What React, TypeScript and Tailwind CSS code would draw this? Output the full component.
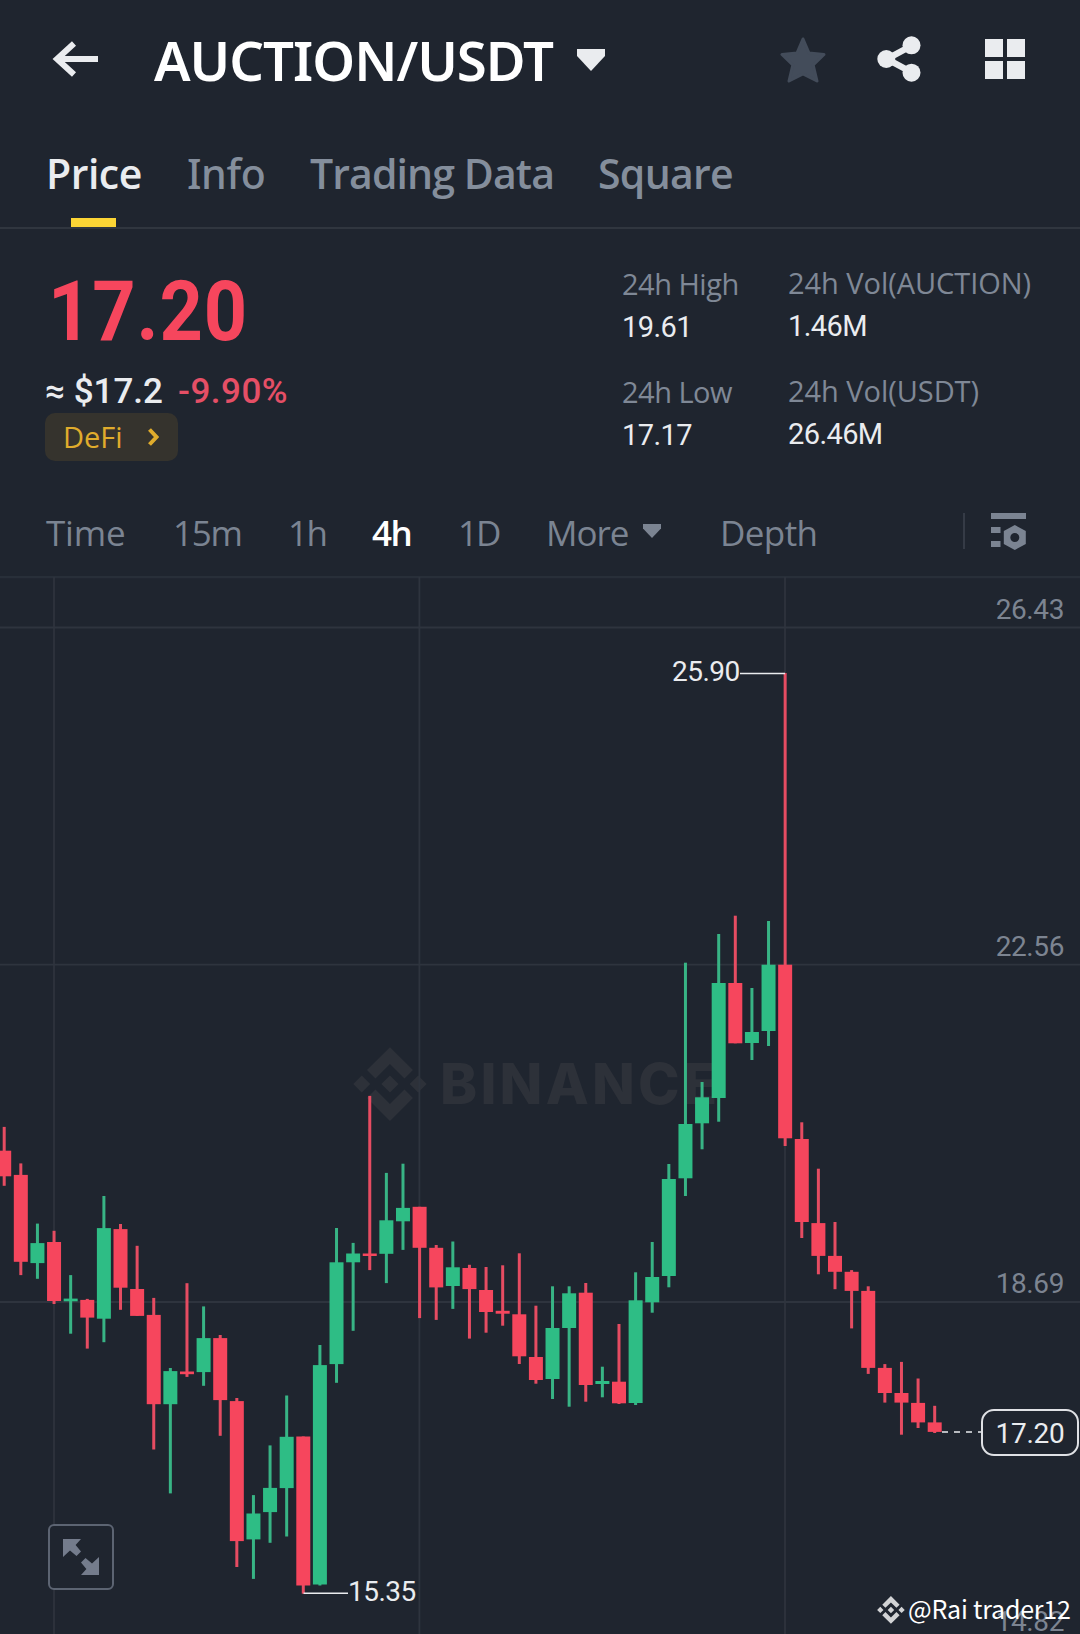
const UP = "#2ebd85";
const DOWN = "#f6465d";

// [direction, high, body top, body bottom, low] in chart pixels, one entry per 4h candle
type Candle = ["u" | "d", number, number, number, number];

const candles: Candle[] = [
  ["d", 1126.9, 1150.7, 1176.3, 1185.8],
  ["d", 1163.4, 1174.9, 1261.8, 1275.1],
  ["u", 1223.6, 1243.1, 1263.1, 1278.8],
  ["d", 1230.8, 1242, 1301, 1304],
  ["u", 1275.1, 1298.6, 1301.3, 1333.7],
  ["d", 1298.9, 1299.9, 1317.6, 1348.6],
  ["u", 1196, 1228.1, 1318.7, 1342.2],
  ["d", 1224, 1229.1, 1287.7, 1309.8],
  ["d", 1245.8, 1289, 1315.9, 1315.9],
  ["d", 1297.9, 1314.9, 1404.2, 1449.5],
  ["u", 1368, 1371.1, 1404.2, 1493.4],
  ["d", 1283.2, 1371.5, 1374.2, 1376.9],
  ["u", 1306.4, 1338.1, 1372.1, 1385.8],
  ["d", 1335, 1338.1, 1400.1, 1435.8],
  ["d", 1398, 1401.1, 1541.1, 1567],
  ["u", 1495.1, 1513.5, 1539.4, 1578.9],
  ["u", 1445.4, 1487.9, 1512.1, 1542.8],
  ["u", 1395.5, 1436.8, 1488.1, 1536.5],
  ["d", 1436.5, 1436.5, 1585.5, 1593.7],
  ["u", 1345, 1365.1, 1584.5, 1585.5],
  ["u", 1228, 1262.3, 1364.1, 1382.8],
  ["u", 1242.9, 1253.5, 1262.3, 1330.8],
  ["d", 1095.9, 1253.5, 1256, 1270.1],
  ["u", 1172.9, 1220.3, 1253.8, 1283.1],
  ["u", 1163.7, 1207.9, 1221.3, 1249.9],
  ["d", 1206.8, 1206.8, 1247.8, 1318.1],
  ["d", 1245, 1247.8, 1287.4, 1319.9],
  ["u", 1241.5, 1267.3, 1286, 1308.9],
  ["d", 1264.8, 1268, 1289.1, 1338.6],
  ["d", 1267, 1290, 1312, 1332.7],
  ["d", 1265.3, 1310.8, 1313.7, 1325.7],
  ["d", 1253.3, 1314.3, 1356.3, 1364],
  ["d", 1305.7, 1357, 1380, 1383.7],
  ["u", 1286.3, 1328, 1379, 1399],
  ["u", 1286.3, 1293.3, 1328, 1406.7],
  ["d", 1283, 1292.7, 1385, 1401.7],
  ["u", 1366.7, 1381, 1384, 1397.3],
  ["d", 1324, 1381.7, 1403.3, 1404],
  ["u", 1272.3, 1300.3, 1403, 1405],
  ["u", 1242, 1277, 1302.3, 1312.7],
  ["u", 1164, 1179, 1276, 1287.3],
  ["u", 962.7, 1124, 1178.3, 1196],
  ["u", 1082, 1097.3, 1123.3, 1149.3],
  ["u", 934, 983, 1098, 1121.7],
  ["d", 915.7, 983, 1043.3, 1043.3],
  ["u", 988, 1032, 1043, 1060],
  ["u", 921, 964.7, 1031, 1046],
  ["d", 673, 964.7, 1138.3, 1146],
  ["d", 1122.3, 1139, 1222, 1238],
  ["d", 1168.7, 1223.1, 1255.9, 1274.3],
  ["d", 1222, 1255.9, 1271.8, 1289.2],
  ["d", 1270.1, 1271.8, 1290.9, 1328.4],
  ["d", 1286.3, 1290.9, 1367.9, 1373.9],
  ["d", 1364.1, 1367.9, 1393, 1402.6],
  ["d", 1361.9, 1393, 1402.6, 1434.7],
  ["d", 1378.5, 1402.9, 1422.4, 1428],
  ["d", 1405.8, 1422.4, 1431.9, 1433],
];

const priceLines = [
  { y: 627.5, label: "26.43" },
  { y: 964.7, label: "22.56" },
  { y: 1302, label: "18.69" },
  { y: 1639.2, label: "14.82" },
];

const tabs = [
  { label: "Price", cls: "w-[141px] text-[#eaecef] font-['Open_Sans'] font-semibold tracking-[-0.5px]" },
  { label: "Info", cls: "w-[123px] text-[#848e9c] font-['Noto_Sans'] font-medium tracking-[-0.4px]" },
  { label: "Trading Data", cls: "w-[288px] text-[#848e9c] font-['Open_Sans'] font-semibold tracking-[-0.9px]" },
  { label: "Square", cls: "w-[150px] text-[#848e9c] font-['Open_Sans'] font-semibold tracking-[-0.7px]" },
];

const frames = [
  { label: "Time", cls: "w-[127px] tracking-[-0.2px]" },
  { label: "15m", cls: "w-[115px] tracking-[-1.2px]" },
  { label: "1h", cls: "w-[84px] tracking-[-1.5px]" },
  { label: "4h", cls: "w-[86px] font-semibold text-white tracking-[-1.5px]" },
  { label: "1D", cls: "w-[88px] tracking-[-2px]" },
  { label: "More", cls: "w-[97px] tracking-[-1px]" },
];

const stats = [
  [
    { label: "24h High", value: "19.61" },
    { label: "24h Low", value: "17.17" },
  ],
  [
    { label: "24h Vol(AUCTION)", value: "1.46M" },
    { label: "24h Vol(USDT)", value: "26.46M" },
  ],
];

function Caret({ className }: { className: string }) {
  return (
    <svg viewBox="0 0 28 22" preserveAspectRatio="none" className={className} fill="currentColor">
      <path d="M0 0H28V7L14 22L0 7Z" />
    </svg>
  );
}

const binancePath =
  "M38.17 53.2L63.2 28.18l25.05 25.05 14.56-14.57L63.2 -.95 23.6 38.64zM0 62.67l14.57-14.56 14.56 14.56-14.56 14.57zM38.17 72.14L63.2 97.17l25.05-25.04 14.57 14.55L63.2 126.3 23.6 86.71zM97.27 62.67l14.57-14.56 14.56 14.56-14.56 14.57zM77.98 62.66L63.2 47.88 48.43 62.66 63.2 77.44z";

function Header() {
  return (
    <header className="flex h-[118px] items-center pl-[52px] pr-[55px] text-[#eaecef]">
      <svg viewBox="0 0 46 36" className="h-9 w-[46px] shrink-0" fill="none" stroke="currentColor" strokeWidth="6">
        <path d="M46 18H6M22 2.5L5 18L22 33.5" />
      </svg>
      <h1 className="ml-14 w-[423px] whitespace-nowrap pt-[2px] font-['Noto_Sans'] text-[54.5px] font-semibold leading-[118px] tracking-[-1px] text-white">
        AUCTION/USDT
      </h1>
      <Caret className="mt-px h-[22px] w-7 shrink-0" />
      <div className="ml-auto flex items-center">
        <svg viewBox="0 0 46 46" className="mt-px size-[46px] text-[#434c5a]" fill="currentColor" stroke="currentColor" strokeWidth="3" strokeLinejoin="round">
          <path d="M23 2L29 16L44 17.5L33.2 28L37 44L23 37L9 44L12.8 28L2 17.5L17 16Z" />
        </svg>
        <svg viewBox="0 0 44 46" className="ml-[51px] h-[46px] w-11" fill="currentColor">
          <path d="M35 9.5L10 23L35 36.5" fill="none" stroke="currentColor" strokeWidth="6.5" />
          <circle cx="9.3" cy="23" r="9" />
          <circle cx="34.5" cy="9.3" r="9" />
          <circle cx="34.5" cy="36.7" r="9" />
        </svg>
        <div className="ml-16 grid grid-cols-2 gap-1">
          <span className="size-[18px] bg-current" />
          <span className="size-[18px] bg-current" />
          <span className="size-[18px] bg-current" />
          <span className="size-[18px] bg-current" />
        </div>
      </div>
    </header>
  );
}

function Chart() {
  return (
    <div className="relative h-[1058px] overflow-hidden">
      <svg viewBox="0 576 1080 1058" className="block h-[1058px] w-[1080px]">
        <g fill="#2d3139">
          <g transform="translate(353.3 1047.7) scale(0.58)">
            <path d={binancePath} />
          </g>
          <text x="440" y="1104" fontSize="56" fontWeight="800" letterSpacing="3.2" className="font-['Inter']">
            BINANCE
          </text>
        </g>

        <g stroke="#2e343e" strokeWidth="1.8">
          <path d="M0 577H1080" strokeWidth="2.6" stroke="#282f39" />
          {[54, 419.4, 785].map((x) => (
            <path key={x} d={`M${x} 577V1634`} />
          ))}
          {priceLines.map((l) => (
            <path key={l.label} d={`M0 ${l.y}H1080`} />
          ))}
        </g>

        {candles.map(([dir, high, top, bottom, low], i) => {
          const x = 4.2 + i * 16.616;
          return (
            <g key={i}>
              <rect x={x - 1.5} y={high} width="3" height={low - high} fill={dir === "u" ? "#38b485" : "#e64c62"} />
              <rect x={x - 7} y={top} width="14" height={bottom - top} fill={dir === "u" ? UP : DOWN} />
            </g>
          );
        })}

        <g className="font-['Roboto']" fontSize="28">
          {priceLines.map((l) => (
            <text key={l.label} x="1064" y={l.y - 8.7} textAnchor="end" fill="#7c8491" letterSpacing="-0.4">
              {l.label}
            </text>
          ))}
          <g fill="#eaecef">
            <text x="672" y="681" letterSpacing="-0.5">25.90</text>
            <text x="348" y="1601" letterSpacing="-0.5">15.35</text>
          </g>
        </g>
        <g stroke="#eaecef" strokeWidth="1.6">
          <path d="M740 673.5H785M303.5 1593.3H348" />
          <path d="M942 1432H981" strokeDasharray="6 6" />
        </g>
      </svg>

      {/* Last price tag */}
      <div className="absolute left-[981px] top-[833px] flex h-[47px] w-[98px] items-center justify-center rounded-[13px] border-2 border-[#dfe1e5] bg-[#1f252f] pt-[2px] font-['Roboto'] text-[28px] leading-none tracking-[-0.3px] text-[#eaecef]">
        17.20
      </div>

      {/* Full screen */}
      <button className="absolute left-12 top-[948px] flex size-[66px] items-center justify-center rounded-md border-2 border-[#5c6472] bg-[#1f252f] text-[#747c8c]">
        <svg viewBox="0 0 36 36" className="size-9" fill="currentColor">
          <path d="M0 0H18L12.6 6L18 12.5L13.5 17L7 11.5L0 18Z" />
          <path d="M36 36H18L23.4 30L18 23.5L22.5 19L29 24.5L36 18Z" />
        </svg>
      </button>

      <div className="absolute left-[877px] top-[1012px] flex items-center text-white">
        <svg viewBox="0 -1 127 128" className="mt-1 size-7 text-[#d2d3d5]" fill="currentColor">
          <path d={binancePath} />
        </svg>
        <span className="ml-[3px] whitespace-nowrap font-['Noto_Sans_CJK_SC'] text-[25px] leading-[40px] tracking-[-0.2px]">@Rai trader12</span>
      </div>
    </div>
  );
}

export default function App() {
  return (
    <div className="h-[1634px] w-[1080px] overflow-hidden bg-[#1f252f] font-['Open_Sans',sans-serif]">
      <Header />

      <nav className="flex h-[111px] border-b-2 border-[#30363f] pl-[46px] text-[41px] leading-[110px]">
        {tabs.map((t, i) => (
          <div key={t.label} className={`relative h-[109px] whitespace-nowrap ${t.cls}`}>
            {t.label}
            {i === 0 && <span className="absolute bottom-0 left-[25px] h-[9px] w-[45px] bg-[#fcd535]" />}
          </div>
        ))}
      </nav>

      <section className="flex h-[251px]">
        <div className="w-[622px] pl-[45px] pt-[43px]">
          <div className="ml-[3px] w-fit origin-left scale-x-[0.9] font-['Roboto'] text-[84px] font-bold leading-[80px] tracking-[1px] text-[#f6465d]">
            17.20
          </div>
          <div className="mt-[13px] flex h-12 items-center gap-[15px] pt-[6px] font-['Roboto'] text-[35px] font-medium leading-[48px]">
            <span className="text-[#eaecef]">≈ $17.2</span>
            <span className="tracking-[0.5px] text-[#e54f66]">-9.90%</span>
          </div>
          <button className="flex h-12 w-[133px] items-center rounded-[10px] bg-[#35332d] pl-[18px] text-[29px] leading-[48px] text-[#e0ac2c]">
            DeFi
            <svg viewBox="0 0 11 18" className="ml-[25px] h-[18px] w-[11px]" fill="none" stroke="currentColor" strokeWidth="4">
              <path d="M1.5 1.5L8.5 9L1.5 16.5" />
            </svg>
          </button>
        </div>
        {stats.map((col, i) => (
          <div key={i} className={i === 0 ? "w-[166px] pt-9 tracking-[-0.5px]" : "pt-[35px] tracking-[-0.05px]"}>
            {col.map((s) => (
              <div key={s.label} className="h-[108px] whitespace-nowrap">
                <div className="text-[29px] leading-[38px] text-[#7f8896]">{s.label}</div>
                <div className="mt-1 font-['Roboto'] text-[29px] leading-[40px] tracking-[-0.6px] text-[#eaecef]">{s.value}</div>
              </div>
            ))}
          </div>
        ))}
      </section>

      <div className="flex h-24 items-center pl-[46px] pt-[9px] text-[35px] leading-[80px] text-[#7b8492]">
        {frames.map((f) => (
          <span key={f.label} className={`whitespace-nowrap ${f.cls}`}>
            {f.label}
          </span>
        ))}
        <Caret className="-mt-1 h-[14px] w-[18px]" />
        <span className="ml-[59px] tracking-[-0.6px]">Depth</span>
        <span className="-mt-1 ml-auto h-9 w-[2px] bg-[#353b46]" />
        <svg viewBox="0 0 35 37" className="-mt-[2px] ml-[26px] mr-[54px] h-[37px] w-[35px]" fill="currentColor">
          <path d="M0 0H35V6H0ZM0 14H9.5V20H0ZM0 28H9.5V34H0Z" />
          <path fillRule="evenodd" d="M23.8 12L34.8 18V31L23.8 37L12.8 31V18ZM23.8 20A4.5 4.5 0 1 0 23.8 29A4.5 4.5 0 1 0 23.8 20Z" />
        </svg>
      </div>

      <Chart />
    </div>
  );
}
